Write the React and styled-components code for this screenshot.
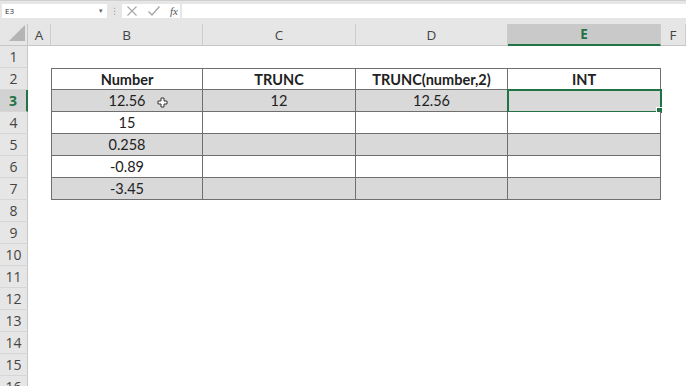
import React from 'react';
import styled, {createGlobalStyle} from "styled-components";

const GREEN = '#217346'

const columns = ['A', 'B', 'C', 'D', 'E', 'F']
const activeCol = 'E'
const activeRow = 3

const table = [
  ['Number', 'TRUNC', 'TRUNC(number,2)', 'INT'],
  ['12.56', '12', '12.56', ''],
  ['15', '', '', ''],
  ['0.258', '', '', ''],
  ['-0.89', '', '', ''],
  ['-3.45', '', '', ''],
]

const Global = createGlobalStyle`
  html, body {
    margin: 0;
    padding: 0;
    background: #ffffff;
    overflow: hidden;
  }
`

const App = () => {
  const rows = Array.from({length: 16}, (_, i) => i + 1)

  return (
    <>
      <Global/>
      <Screen>
        <FormulaBar>
          <NameBox>
            <span>E3</span>
            <Caret>▾</Caret>
          </NameBox>
          <Grip>⋮</Grip>
          <FxButtons>
            <svg width="12" height="12" viewBox="0 0 12 12">
              <path d="M1.5 1.5 L10.5 10.5 M10.5 1.5 L1.5 10.5" stroke="#a6a6a6" strokeWidth="1.1" fill="none"/>
            </svg>
            <svg width="14" height="12" viewBox="0 0 14 12">
              <path d="M1.5 6.5 L5 10 L12.5 1.5" stroke="#a6a6a6" strokeWidth="1.4" fill="none"/>
            </svg>
            <FxLabel>fx</FxLabel>
          </FxButtons>
          <FormulaInput/>
        </FormulaBar>
        <Strip/>
        <Sheet>
          <Corner>
            <svg width="18" height="17" viewBox="0 0 18 17">
              <polygon points="17,0 17,16 1,16" fill="#b4b4b4"/>
            </svg>
          </Corner>
          {columns.map(c => (
            <ColHead key={c} $active={c === activeCol}>{c}</ColHead>
          ))}
          {rows.map(r => (
            <React.Fragment key={r}>
              <RowHead $active={r === activeRow}>{r}</RowHead>
              <Blank/>
              {[0, 1, 2, 3].map(c => {
                const inTable = r >= 2 && r <= 7
                if (!inTable) return <Blank key={c}/>
                const value = table[r - 2][c]
                return (
                  <Cell
                    key={c}
                    $head={r === 2}
                    $shade={r % 2 === 1}
                    $first={c === 0}
                    $top={r === 2}
                    $selected={r === activeRow && c === 3}
                  >
                    {value}
                    {r === 3 && c === 0 && (
                      <Cursor width="11" height="11" viewBox="0 0 11 11">
                        <path d="M4 1 H7 V4 H10 V7 H7 V10 H4 V7 H1 V4 H4 Z" fill="#ffffff" stroke="#333" strokeWidth="1"/>
                      </Cursor>
                    )}
                    {r === activeRow && c === 3 && <Handle/>}
                  </Cell>
                )
              })}
              <Blank/>
            </React.Fragment>
          ))}
        </Sheet>
      </Screen>
    </>
  );
};

const Screen = styled.div`
  width: 686px;
  height: 386px;
  overflow: hidden;
  display: flex;
  flex-direction: column;
  background: #ffffff;

  & > * {
    flex-shrink: 0;
  }
`
const FormulaBar = styled.div`
  display: flex;
  align-items: center;
  height: 20px;
  padding: 0 0 0 2px;
  background: #e6e6e6;
  border-top: 1px solid #d0d0d0;
  box-sizing: border-box;
`
const NameBox = styled.div`
  display: flex;
  align-items: center;
  justify-content: space-between;
  width: 105px;
  height: 14px;
  padding: 0 4px 0 3px;
  box-sizing: border-box;
  background: #ffffff;
  font-family: "Open Sans", sans-serif;
  font-size: 8px;
  color: #333;
`
const Caret = styled.span`
  font-size: 7px;
  color: #666;
`
const Grip = styled.div`
  width: 15px;
  text-align: center;
  font-family: "DejaVu Sans", sans-serif;
  font-size: 9px;
  color: #9a9a9a;
`
const FxButtons = styled.div`
  display: flex;
  align-items: center;
  gap: 9px;
  height: 14px;
  width: 58px;
  padding: 0 0 0 4px;
  box-sizing: border-box;
  background: #ffffff;
`
const FxLabel = styled.span`
  font-family: "Liberation Serif", serif;
  font-style: italic;
  font-size: 11px;
  color: #555;
`
const FormulaInput = styled.div`
  flex: 1;
  height: 14px;
  margin-left: 2px;
  background: #ffffff;
`
const Strip = styled.div`
  height: 4px;
  background: #e6e6e6;
`
const Sheet = styled.div`
  display: grid;
  grid-template-columns: 28px 23px 152px 153px 152px 153px 25px;
  grid-auto-rows: 22px;
  font-family: "Lato", "Liberation Sans", sans-serif;
`
const Corner = styled.div`
  display: flex;
  align-items: flex-end;
  justify-content: flex-end;
  padding: 0 1px 3px 0;
  background: #e6e6e6;
  border-right: 1px solid #c6c6c6;
  border-bottom: 1px solid #c6c6c6;
  box-sizing: border-box;
`
const ColHead = styled.div`
  display: flex;
  align-items: center;
  justify-content: center;
  box-sizing: border-box;
  font-family: "Open Sans", sans-serif;
  font-size: 13.5px;
  font-weight: ${p => p.$active ? 700 : 400};
  color: ${p => p.$active ? GREEN : '#444'};
  background: ${p => p.$active ? '#c9c9c9' : '#e6e6e6'};
  border-right: 1px solid #cdcdcd;
  border-bottom: ${p => p.$active ? `2px solid ${GREEN}` : '1px solid #c6c6c6'};
`
const RowHead = styled.div`
  display: flex;
  align-items: center;
  justify-content: center;
  box-sizing: border-box;
  font-family: "Open Sans", sans-serif;
  font-size: 14px;
  font-weight: ${p => p.$active ? 700 : 400};
  color: ${p => p.$active ? GREEN : '#444'};
  background: ${p => p.$active ? '#d2d2d2' : '#e6e6e6'};
  border-right: ${p => p.$active ? `2px solid ${GREEN}` : '1px solid #c6c6c6'};
  border-bottom: 1px solid #d6d6d6;
`
const Blank = styled.div`
  background: #ffffff;
`
const Cell = styled.div`
  position: relative;
  display: flex;
  align-items: center;
  justify-content: center;
  box-sizing: border-box;
  font-size: 14.5px;
  font-weight: ${p => p.$head ? 700 : 400};
  color: #222;
  background: ${p => p.$shade ? '#d9d9d9' : '#ffffff'};
  border-right: 1px solid #6f6f6f;
  border-bottom: 1px solid #6f6f6f;
  border-left: ${p => p.$first ? '1px solid #6f6f6f' : 'none'};
  border-top: ${p => p.$top ? '1px solid #6f6f6f' : 'none'};
  outline: ${p => p.$selected ? `2px solid ${GREEN}` : 'none'};
  outline-offset: -1px;
`
const Cursor = styled.svg`
  position: absolute;
  left: 105px;
  top: 7px;
`
const Handle = styled.span`
  position: absolute;
  right: -3px;
  bottom: -3px;
  width: 5px;
  height: 5px;
  background: ${GREEN};
  border: 1px solid #ffffff;
`

export default App;
